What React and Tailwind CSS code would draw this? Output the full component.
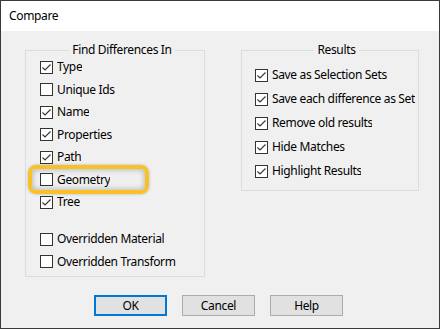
import React from "react";

const font = { fontFamily: '"Noto Sans", "Liberation Sans", sans-serif' };

const Check = ({ checked }) => (
  <span className="w-[13px] h-[13px] shrink-0 border border-[#333] bg-white flex items-center justify-center">
    {checked && (
      <svg width="11" height="11" viewBox="0 0 11 11">
        <path d="M1.5 5.5 L4 8 L9.5 2.5" fill="none" stroke="#333" strokeWidth="1.1" />
      </svg>
    )}
  </span>
);

const Row = ({ label, checked, className = "", clip, children }) => (
  <div className={`relative flex items-center gap-[4px] ${className}`}>
    {children}
    <Check checked={checked} />
    <span className={`whitespace-nowrap overflow-hidden ${clip || ""}`}>{label}</span>
  </div>
);

const Button = ({ children, primary }) => (
  <button
    className={`w-[73px] h-[21px] bg-[#e1e1e1] flex items-center justify-center text-black ${
      primary ? "border-2 border-[#0078d7]" : "border border-[#adadad]"
    }`}
  >
    {children}
  </button>
);

const App = () => {
  const find = [
    ["Type", true],
    ["Unique Ids", false],
    ["Name", true],
    ["Properties", true],
    ["Path", true],
  ];
  const results = [
    ["Save as Selection Sets", true],
    ["Save each difference as Set", true],
    ["Remove old results", true, "w-[100px]"],
    ["Hide Matches", true],
    ["Highlight Results", true, "w-[89px]"],
  ];

  return (
    <div
      className="w-[440px] h-[329px] border border-[#3a3a3a] bg-[#f0f0f0] flex flex-col text-[12px] tracking-[-0.35px] text-black"
      style={font}
    >
      <div className="h-[30px] bg-white flex items-center pl-[8px] shrink-0">Compare</div>

      <div className="flex flex-col pt-[12px]">
        <div className="flex items-start gap-[36px] pl-[24px]">
          <fieldset className="w-[180px] border border-[#dcdcdc] pl-[14px] pb-[4.5px]">
            <legend className="mx-auto px-[3px] leading-[14px]">Find Differences In</legend>
            <div className="flex flex-col gap-[2.5px]">
              {find.map(([l, c]) => (
                <Row key={l} label={l} checked={c} className="h-5" />
              ))}
              <Row label="Geometry" checked={false} className="h-5">
                <span className="absolute left-[-12px] top-[-5px] w-[121px] h-[29px] rounded-[8px] border-4 border-[#f8c12a] shadow-[0_0_3px_rgba(0,0,0,0.25),inset_0_0_6px_rgba(0,0,0,0.3)]" />
              </Row>
              <Row label="Tree" checked className="h-5" />
              <Row label="Overridden Material" checked={false} className="h-5 mt-[14.5px]" />
              <Row label="Overridden Transform" checked={false} className="h-5" />
            </div>
          </fieldset>

          <fieldset className="w-[178px] border border-[#dcdcdc] pl-[13px] pt-[6px] pb-[7px]">
            <legend className="mx-auto px-[3px] leading-[14px]">Results</legend>
            <div className="flex flex-col">
              {results.map(([l, c, clip]) => (
                <Row key={l} label={l} checked={c} clip={clip} className="h-6" />
              ))}
            </div>
          </fieldset>
        </div>

        <div className="flex gap-[15px] pl-[93px] mt-[18px]">
          <Button primary>OK</Button>
          <Button>Cancel</Button>
          <Button>Help</Button>
        </div>
      </div>
    </div>
  );
};

export default App;
